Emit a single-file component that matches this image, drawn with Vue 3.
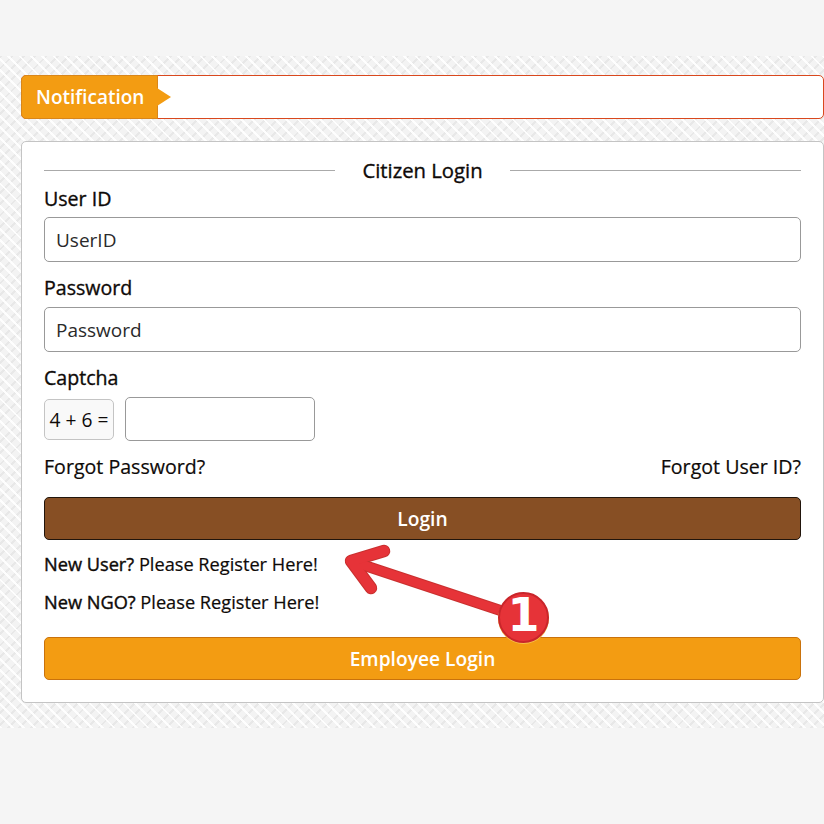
<script setup>
const links = [
  { lead: 'New User?', rest: ' Please Register Here!' },
  { lead: 'New NGO?', rest: ' Please Register Here!' }
]
</script>

<template>
  <div class="page">
    <section class="band">
      <div class="notice">
        <div class="tag">Notification</div>
      </div>
      <div class="card">
        <div class="title"><span>Citizen Login</span></div>
        <div class="label first">User ID</div>
        <div class="input big">UserID</div>
        <div class="label second">Password</div>
        <div class="input big pass">Password</div>
        <div class="label third">Captcha</div>
        <div class="captcha">
          <div class="sum">4 + 6 =</div>
          <div class="input answer"></div>
        </div>
        <div class="forgot">
          <span>Forgot Password?</span>
          <span>Forgot User ID?</span>
        </div>
        <div class="btn login">Login</div>
        <div class="links">
          <div v-for="l in links" :key="l.lead" class="link"><b>{{ l.lead }}</b>{{ l.rest }}</div>
        </div>
        <div class="btn employee">Employee Login</div>
      </div>
      <svg class="arrow" viewBox="0 0 240 120" width="240" height="120" aria-hidden="true">
        <g fill="none" stroke-linecap="round" stroke-linejoin="round">
          <path d="M175 84 L21 33" stroke="#c9302f" stroke-width="11"/>
          <path d="M54 23 L21 33 L41 60" stroke="#c9302f" stroke-width="12.5"/>
          <path d="M175 84 L21 33" stroke="#e63338" stroke-width="9"/>
          <path d="M54 23 L21 33 L41 60" stroke="#e63338" stroke-width="10.5"/>
        </g>
      </svg>
      <div class="badge">1</div>
    </section>
  </div>
</template>

<style scoped>
.page {
  min-height: 824px;
  padding-top: 56px;
  box-sizing: border-box;
  background: #f5f5f5;
  font-family: "Open Sans", "Liberation Sans", sans-serif;
  color: #0e0a08;
  overflow: hidden;
}
.band {
  position: relative;
  height: 672px;
  box-sizing: border-box;
  padding: 19px 0 0 21px;
  background-color: #f3f3f3;
  background-image:
    repeating-linear-gradient(45deg, rgba(255,255,255,.9) 0 2px, transparent 2px 8px),
    repeating-linear-gradient(-45deg, rgba(230,230,230,.85) 0 2px, transparent 2px 8px);
}
.notice {
  height: 44px;
  box-sizing: border-box;
  background: #fff;
  border: 1px solid #d9481e;
  border-radius: 5px;
  display: flex;
}
.tag {
  position: relative;
  width: 137px;
  margin: -1px 0 -1px -1px;
  padding-left: 14px;
  box-sizing: border-box;
  background: #f39c12;
  border: 1px solid #d9861a;
  border-radius: 5px 0 0 5px;
  color: #fff;
  font-size: 19px;
  font-weight: 600;
  line-height: 42px;
}
.tag::after {
  content: "";
  position: absolute;
  left: 100%;
  top: 12px;
  border-left: 14px solid #f39c12;
  border-top: 9px solid transparent;
  border-bottom: 9px solid transparent;
}
.card {
  margin-top: 22px;
  height: 562px;
  box-sizing: border-box;
  padding: 13px 22px 0 22px;
  background: #fff;
  border: 1px solid #c4c4c4;
  border-radius: 5px;
}
.title {
  display: flex;
  align-items: center;
  justify-content: center;
  height: 30px;
  font-size: 20.3px;
  -webkit-text-stroke: .35px currentColor;
}
.title::before, .title::after {
  content: "";
  flex: 1;
  border-top: 1px solid #aaa;
}
.title span { padding: 0 27px; }
.label {
  font-size: 19.6px;
  -webkit-text-stroke: .35px currentColor;
  line-height: 26px;
}
.first { margin-top: 1px; }
.second { margin-top: 13px; }
.third { margin-top: 13px; }
.input {
  box-sizing: border-box;
  background: #fff;
  border: 1px solid #999;
  border-radius: 5px;
  font-size: 19px;
  color: #2a2a2a;
}
.big {
  height: 45px;
  margin-top: 5px;
  padding-left: 11px;
  line-height: 45px;
}
.pass { margin-top: 6px; }
.captcha {
  display: flex;
  align-items: center;
  gap: 11px;
  margin-top: 6px;
}
.sum {
  width: 70px;
  height: 41px;
  box-sizing: border-box;
  border: 1px solid #c4c4c4;
  border-radius: 5px;
  background: #f9f9f9;
  font-size: 19.2px;
  line-height: 39px;
  text-align: center;
  white-space: nowrap;
}
.answer {
  width: 190px;
  height: 44px;
}
.forgot {
  display: flex;
  justify-content: space-between;
  margin-top: 13px;
  font-size: 19.6px;
  line-height: 26px;
  -webkit-text-stroke: .2px currentColor;
}
.btn {
  height: 43px;
  box-sizing: border-box;
  border-radius: 5px;
  color: #fff;
  font-size: 19.2px;
  font-weight: 600;
  line-height: 41px;
  text-align: center;
}
.login {
  margin-top: 17px;
  background: #874f24;
  border: 1px solid #21150c;
}
.links {
  margin-top: 11px;
  font-size: 18.2px;
  line-height: 26px;
  -webkit-text-stroke: .2px currentColor;
}
.link + .link { margin-top: 12px; }
.link b { font-weight: 400; -webkit-text-stroke: .4px currentColor; }
.employee {
  margin-top: 22px;
  background: #f39c12;
  border: 1px solid #c9720c;
}
.arrow {
  position: absolute;
  left: 330px;
  top: 472px;
  overflow: visible;
}
.badge {
  position: absolute;
  left: 498px;
  top: 536px;
  width: 51px;
  height: 51px;
  box-sizing: border-box;
  border-radius: 50%;
  background: #e63338;
  border: 2px solid #c9252b;
  box-shadow: 0 1px 0 #f5c04a;
  color: #fff;
  font-family: "DejaVu Sans", "Liberation Sans", sans-serif;
  font-size: 46px;
  font-weight: 700;
  line-height: 42px;
  text-align: center;
}
</style>
